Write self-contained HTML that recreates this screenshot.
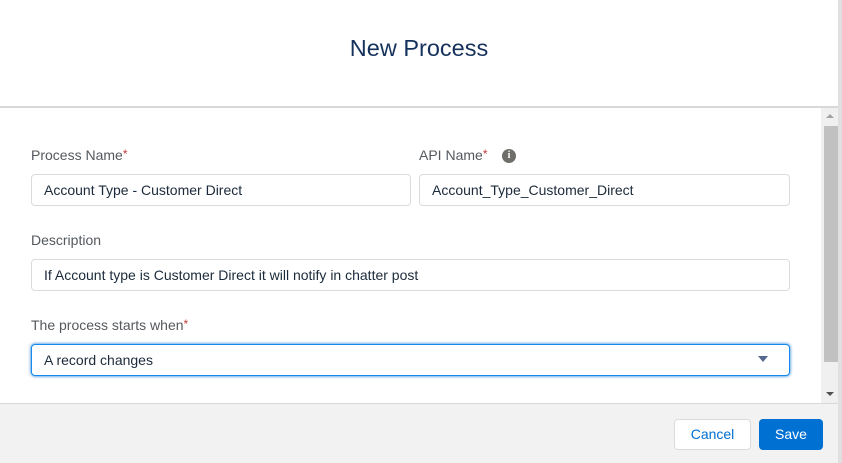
<!DOCTYPE html>
<html><head><style>
*{box-sizing:border-box;margin:0;padding:0}
body{width:842px;height:463px;background:#fff;font-family:"Liberation Sans",sans-serif;position:relative;overflow:hidden;color:#3e3e3c}
.abs{position:absolute}
.lbl{position:absolute;font-size:14px;color:#54595e}
.req{color:#c23934;font-size:12px;vertical-align:top}
.in{position:absolute;border:1px solid #dddbda;border-radius:4px;height:32px;font-size:14px;line-height:30px;padding-left:12px;color:#1b2a3a;background:#fff}
</style></head><body>
<div class="abs" style="left:838px;top:0;width:4px;height:463px;background:#e0e0e0"></div>
<div class="abs" style="left:0;top:35px;width:838px;text-align:center;font-size:23.5px;color:#16325c">New Process</div>
<div class="abs" style="left:0;top:106px;width:838px;height:2px;background:#d8d8d8"></div>
<div class="lbl" style="left:31px;top:147px">Process Name<span class="req">*</span></div>
<div class="lbl" style="left:419px;top:147px">API Name<span class="req">*</span></div>
<div class="abs" style="left:502px;top:149px;width:14px;height:14px;border-radius:50%;background:#706e6b;color:#fff;font-size:10px;font-weight:bold;text-align:center;line-height:14px;font-family:'Liberation Serif',serif">i</div>
<div class="in" style="left:31px;top:174px;width:380px">Account Type - Customer Direct</div>
<div class="in" style="left:419px;top:174px;width:371px">Account_Type_Customer_Direct</div>
<div class="lbl" style="left:31px;top:232px">Description</div>
<div class="in" style="left:31px;top:259px;width:759px">If Account type is Customer Direct it will notify in chatter post</div>
<div class="lbl" style="left:31px;top:317px">The process starts when<span class="req">*</span></div>
<div class="in" style="left:31px;top:344px;width:759px;border-color:#1589ee;box-shadow:0 0 3px #0070d2">A record changes</div>
<div class="abs" style="left:758px;top:356px;width:0;height:0;border-left:5px solid transparent;border-right:5px solid transparent;border-top:6px solid #54698d"></div>
<div class="abs" style="left:821px;top:108px;width:17px;height:296px;background:#f0f0f0"></div>
<div class="abs" style="left:824px;top:126px;width:14px;height:236px;background:#c1c1c1"></div>
<div class="abs" style="left:826px;top:114px;border-left:4px solid transparent;border-right:4px solid transparent;border-bottom:4px solid #a3a3a3"></div>
<div class="abs" style="left:826px;top:392px;border-left:4px solid transparent;border-right:4px solid transparent;border-top:4px solid #505050"></div>
<div class="abs" style="left:0;top:403px;width:838px;height:60px;background:#f3f2f2;border-top:1px solid #d8d8d8"></div>
<div class="abs" style="left:674px;top:419px;width:77px;height:31px;border:1px solid #dddbda;border-radius:4px;background:#fff;color:#0070d2;font-size:14px;text-align:center;line-height:29px">Cancel</div>
<div class="abs" style="left:759px;top:419px;width:64px;height:31px;border-radius:4px;background:#0070d2;color:#fff;font-size:14px;text-align:center;line-height:31px">Save</div>
</body></html>
